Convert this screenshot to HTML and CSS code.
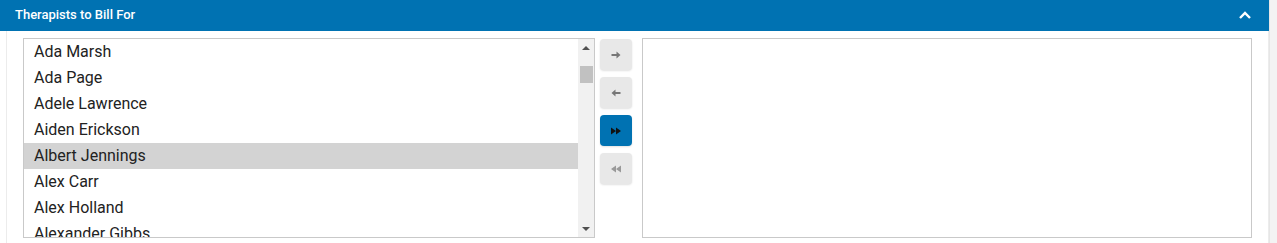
FILE: index.html
```html
<!DOCTYPE html>
<html lang="en">
<head>
    <meta charset="UTF-8">
    <meta name="viewport" content="width=device-width, initial-scale=1.0">
    <title>Therapists to Bill For</title>
    <link rel="stylesheet" href="styles.css">
</head>
<body>
    <div class="page">
        <div class="panel">
            <div class="panel-header">
                <span class="panel-title">Therapists to Bill For</span>
                <svg class="chevron" width="14" height="10" viewBox="0 0 14 10">
                    <polyline points="2,8 7,3 12,8" fill="none" stroke="#fff" stroke-width="2.4"/>
                </svg>
            </div>
            <div class="panel-body">
                <div class="picker">
                    <!-- Available therapists -->
                    <div class="listbox">
                        <div class="items">
                            <div class="item">Ada Marsh</div>
                            <div class="item">Ada Page</div>
                            <div class="item">Adele Lawrence</div>
                            <div class="item">Aiden Erickson</div>
                            <div class="item selected">Albert Jennings</div>
                            <div class="item">Alex Carr</div>
                            <div class="item">Alex Holland</div>
                            <div class="item">Alexander Gibbs</div>
                        </div>
                        <div class="scrollbar">
                            <div class="arrow-up"></div>
                            <div class="track">
                                <div class="thumb"></div>
                            </div>
                            <div class="arrow-down"></div>
                        </div>
                    </div>

                    <!-- Move buttons -->
                    <div class="moves">
                        <button class="move">
                            <svg width="12" height="10" viewBox="0 0 12 10"><path d="M1.5 4h5V1.5L10.5 5l-4 3.5V6h-5z" fill="#777"/></svg>
                        </button>
                        <button class="move">
                            <svg width="12" height="10" viewBox="0 0 12 10"><path d="M10.5 4h-5V1.5L1.5 5l4 3.5V6h5z" fill="#777"/></svg>
                        </button>
                        <button class="move active">
                            <svg width="12" height="10" viewBox="0 0 12 10"><path d="M1 1.5L6 5 1 8.5zM6 1.5L11 5 6 8.5z" fill="#111"/></svg>
                        </button>
                        <button class="move">
                            <svg width="12" height="10" viewBox="0 0 12 10"><path d="M11 1.5L6 5l5 3.5zM6 1.5L1 5l5 3.5z" fill="#999"/></svg>
                        </button>
                    </div>

                    <!-- Selected therapists -->
                    <div class="listbox chosen"></div>
                </div>
            </div>
        </div>
        <div class="gutter"></div>
    </div>
</body>
</html>
```

FILE: styles.css
```css
body {
    margin: 0;
    font-family: Roboto, "Liberation Sans", Arial, sans-serif;
    background-color: #fff;
    color: #222;
}
.page {
    display: flex;
    height: 243px;
    overflow: hidden;
}
.panel {
    width: 1269px;
    display: flex;
    flex-direction: column;
}
.panel-header {
    height: 31px;
    background-color: #0072b2;
    color: #fff;
    display: flex;
    align-items: center;
    justify-content: space-between;
    padding: 0 17px 0 15px;
}
.panel-title {
    font-size: 13px;
    font-weight: 500;
    margin-top: -3px;
}
.chevron {
    margin-top: -1px;
}
.panel-body {
    flex: 1;
    margin-left: 6px;
    border-left: 1px solid #ececec;
    border-right: 1px solid #ececec;
    padding: 7px 16px 0 16px;
}
.picker {
    display: flex;
    align-items: flex-start;
}
.listbox {
    width: 570px;
    height: 198px;
    border: 1px solid #c9c9c9;
    display: flex;
    background-color: #fff;
}
.items {
    flex: 1;
    overflow: hidden;
}
.item {
    height: 26px;
    line-height: 26px;
    padding-left: 10px;
    font-size: 16px;
    white-space: nowrap;
}
.item.selected {
    background-color: #d3d3d3;
}
.scrollbar {
    width: 16px;
    background-color: #f1f1f1;
    display: flex;
    flex-direction: column;
    align-items: center;
}
.arrow-up,
.arrow-down {
    height: 17px;
    width: 16px;
    display: flex;
    align-items: center;
    justify-content: center;
}
.arrow-up::before {
    content: '';
    border-left: 4px solid transparent;
    border-right: 4px solid transparent;
    border-bottom: 4px solid #505050;
}
.arrow-down::before {
    content: '';
    border-left: 4px solid transparent;
    border-right: 4px solid transparent;
    border-top: 4px solid #505050;
}
.track {
    flex: 1;
    width: 16px;
    display: flex;
    justify-content: center;
}
.thumb {
    width: 13px;
    height: 17px;
    margin-top: 10px;
    background-color: #c1c1c1;
}
.moves {
    display: flex;
    flex-direction: column;
    gap: 7px;
    margin: 1px 10px 0 5px;
}
.move {
    width: 32px;
    height: 31px;
    border: none;
    border-radius: 4px;
    background-color: #e8e8e8;
    box-shadow: 0 1px 2px rgba(0, 0, 0, 0.12);
    display: flex;
    align-items: center;
    justify-content: center;
    padding: 0;
    cursor: pointer;
}
.move.active {
    background-color: #0072b2;
}
.listbox.chosen {
    width: 608px;
}
.gutter {
    flex: 1;
    background-color: #f3f3f3;
    border-left: 1px solid #e6e6e6;
}
```
